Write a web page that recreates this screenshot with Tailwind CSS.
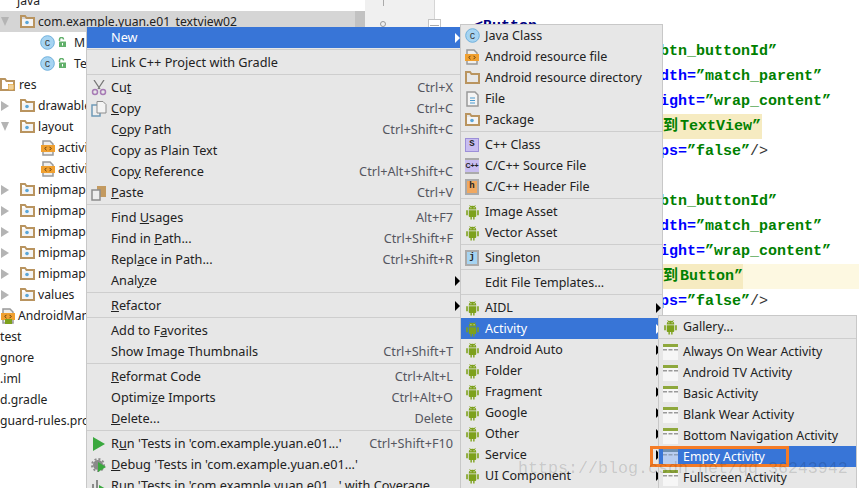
<!DOCTYPE html>
<html lang="en">
<head>
<meta charset="utf-8">
<title>New Empty Activity</title>
<script src="https://cdn.jsdelivr.net/npm/@tailwindcss/browser@4"></script>
</head>
<body class="m-0 bg-white">
<!-- shared icons -->
<svg width="0" height="0" class="absolute">
  <symbol id="android" viewBox="0 0 16 16">
    <path fill="#7da11c" d="M4 5.200a4 3.800 0 0 1 8 0zM4 6h8v6.200c0 .6-.4 1-1 1h-.8V16H8.700v-2.800H7.300V16H5.800v-2.800H5c-.6 0-1-.4-1-1zM1.300 6H3v5.500H1.300zM13 6h1.700v5.500H13z"/>
    <path stroke="#7da11c" d="M5 .8l1.200 1.800M11 .8L9.800 2.600"/>
    <path fill="#e7e7e7" d="M5.800 3h1v1h-1zM9.200 3h1v1h-1z"/>
  </symbol>
  <symbol id="folder" viewBox="0 0 15 13">
    <path fill="none" stroke="#b9945f" stroke-width="2" d="M1 12V1h4l1.500 2H14v9z"/>
    <path fill="#f4f4f4" d="M2 4h11v7H2z"/>
    <circle cx="7" cy="7.500" r="1.800" fill="#5aa6d8"/>
  </symbol>
  <symbol id="folder-plain" viewBox="0 0 15 13">
    <path fill="none" stroke="#b9945f" stroke-width="2" d="M1 12V1h4l1.500 2H14v9z"/>
  </symbol>
  <symbol id="cls" viewBox="0 0 15 15">
    <circle cx="7.500" cy="7.500" r="6.800" fill="#a6d4f2" stroke="#6fb0dc"/>
    <text x="7.500" y="10.500" text-anchor="middle" font-family="Liberation Mono, monospace" font-size="9" fill="#333">C</text>
  </symbol>
  <symbol id="res-file" viewBox="0 0 14 16">
    <path fill="#eee" stroke="#999" stroke-width="1.500" d="M2 1h7l3 3v11H2z"/>
    <path fill="#f0a030" d="M0 5h14v7H0z"/>
    <path fill="none" stroke="#5b3a10" d="M5.500 6.800L3.800 8.500l1.700 1.700M8.500 6.800l1.700 1.700-1.700 1.700"/>
  </symbol>
  <symbol id="lock" viewBox="0 0 9 11">
    <path fill="none" stroke="#62b06b" stroke-width="1.500" d="M1.500 4V2.500a2 2 0 0 1 4 0"/>
    <path fill="#62b06b" d="M1 4.500h7V10H1z"/>
    <path fill="#fff" d="M4 6h1v2.500H4z"/>
  </symbol>
  <symbol id="activity" viewBox="0 0 15 16">
    <path fill="#f6f6f6" d="M0 0h15v16H0z"/>
    <path fill="#8ea83c" d="M0 0h15v3H0z"/>
    <path fill="#999" d="M0 5h4v1.500H0zM5.500 5h4v1.500h-4zM11 5h4v1.500h-4z"/>
  </symbol>
</svg>

<div class="relative w-[859px] h-[488px] overflow-hidden font-['Noto_Sans',sans-serif] text-[12.7px] text-[#222]">
  <div class="flex h-full">
    <!-- project tree -->
    <div class="w-[365px] shrink-0 -mt-[10px] text-[12.2px] leading-[21px] whitespace-nowrap">
      <div class="flex items-center h-[21px] pl-[17px]"><span>java</span></div>
      <div class="flex items-center h-[21px] bg-[linear-gradient(to_right,#d5d5d5_355px,#c2c2c2_355px)]">
        <span class="ml-[1px] mr-[11px] w-0 h-0 border-x-[4px] border-x-transparent border-t-[9px] border-t-[#b4b4b4]"></span>
        <svg class="w-[15px] h-[13px] mr-[3px]"><use href="#folder"/></svg><span>com.example.yuan.e01_textview02</span>
      </div>
      <div class="flex items-center h-[21px] pl-[40px]"><svg class="w-[15px] h-[15px] mr-[3px]"><use href="#cls"/></svg><svg class="w-[9px] h-[11px] mr-[7px]"><use href="#lock"/></svg><span>M</span></div>
      <div class="flex items-center h-[21px] pl-[40px]"><svg class="w-[15px] h-[15px] mr-[3px]"><use href="#cls"/></svg><svg class="w-[9px] h-[11px] mr-[7px]"><use href="#lock"/></svg><span>Te</span></div>
      <div class="flex items-center h-[21px]"><svg class="w-[15px] h-[13px] mr-[4px]" viewBox="0 0 15 13"><use href="#folder-plain"/><path fill="#e0a030" d="M8 6h6v6H8z"/><path stroke="#fff" stroke-width=".6" d="M8 8h6M8 10h6M10 6v6M12 6v6"/></svg><span>res</span></div>
      <div class="flex items-center h-[21px]"><span class="ml-[1px] mr-[11px] w-0 h-0 border-y-[5px] border-y-transparent border-l-[8px] border-l-[#b4b4b4]"></span><svg class="w-[15px] h-[13px] mr-[3px]"><use href="#folder"/></svg><span>drawable</span></div>
      <div class="flex items-center h-[21px]"><span class="ml-[1px] mr-[11px] w-0 h-0 border-x-[4px] border-x-transparent border-t-[9px] border-t-[#b4b4b4]"></span><svg class="w-[15px] h-[13px] mr-[3px]"><use href="#folder"/></svg><span>layout</span></div>
      <div class="flex items-center h-[21px] pl-[41px]"><svg class="w-[14px] h-[16px] mr-[3px]"><use href="#res-file"/></svg><span>activity</span></div>
      <div class="flex items-center h-[21px] pl-[41px]"><svg class="w-[14px] h-[16px] mr-[3px]"><use href="#res-file"/></svg><span>activity</span></div>
      <div class="flex items-center h-[21px]"><span class="ml-[1px] mr-[11px] w-0 h-0 border-y-[5px] border-y-transparent border-l-[8px] border-l-[#b4b4b4]"></span><svg class="w-[15px] h-[13px] mr-[3px]"><use href="#folder"/></svg><span>mipmap</span></div>
      <div class="flex items-center h-[21px]"><span class="ml-[1px] mr-[11px] w-0 h-0 border-y-[5px] border-y-transparent border-l-[8px] border-l-[#b4b4b4]"></span><svg class="w-[15px] h-[13px] mr-[3px]"><use href="#folder"/></svg><span>mipmap</span></div>
      <div class="flex items-center h-[21px]"><span class="ml-[1px] mr-[11px] w-0 h-0 border-y-[5px] border-y-transparent border-l-[8px] border-l-[#b4b4b4]"></span><svg class="w-[15px] h-[13px] mr-[3px]"><use href="#folder"/></svg><span>mipmap</span></div>
      <div class="flex items-center h-[21px]"><span class="ml-[1px] mr-[11px] w-0 h-0 border-y-[5px] border-y-transparent border-l-[8px] border-l-[#b4b4b4]"></span><svg class="w-[15px] h-[13px] mr-[3px]"><use href="#folder"/></svg><span>mipmap</span></div>
      <div class="flex items-center h-[21px]"><span class="ml-[1px] mr-[11px] w-0 h-0 border-y-[5px] border-y-transparent border-l-[8px] border-l-[#b4b4b4]"></span><svg class="w-[15px] h-[13px] mr-[3px]"><use href="#folder"/></svg><span>mipmap</span></div>
      <div class="flex items-center h-[21px]"><span class="ml-[1px] mr-[11px] w-0 h-0 border-y-[5px] border-y-transparent border-l-[8px] border-l-[#b4b4b4]"></span><svg class="w-[15px] h-[13px] mr-[3px]"><use href="#folder"/></svg><span>values</span></div>
      <div class="flex items-center h-[21px] pl-[1px]"><svg class="w-[14px] h-[16px] mr-[3px]" viewBox="0 0 14 16"><use href="#res-file"/><path fill="#7da11c" d="M4 11h7v5H4z"/></svg><span>AndroidManifest.xml</span></div>
      <div class="h-[21px]">test</div>
      <div class="h-[21px]">gnore</div>
      <div class="h-[21px]">.iml</div>
      <div class="h-[21px]">d.gradle</div>
      <div class="h-[21px]">guard-rules.pro</div>
      <div class="h-[21px]"></div>
      <div class="h-[21px]"></div>
      <div class="h-[21px]"></div>
      <div class="h-[21px] mt-[-1px]">ore</div>
    </div>
    <!-- gutter -->
    <div class="relative w-[70px] shrink-0 bg-[#f0f0f0] border-r border-[#d5d5d5]">
      <div class="absolute left-[18px] top-0 w-[1px] h-[6px] bg-[#aaa]"></div>
      <div class="absolute left-[15px] top-[21px] w-[6px] h-[6px] rounded-full border border-[#999]"></div>
      <div class="absolute left-[63px] top-[19px] flex items-center justify-center w-[13px] h-[12px] bg-white border border-[#c4c4c4]"><div class="w-[9px] h-[1px] bg-[#aaa]"></div></div>
    </div>
    <!-- editor -->
    <div class="flex-1 min-w-0 pt-[14px] font-['Liberation_Mono','Noto_Sans_CJK_SC',monospace] text-[15px] font-bold leading-[25px] whitespace-nowrap">
      <div class="h-[25px] pl-[39px] text-[#000080]">&lt;Button</div>
      <div class="h-[25px] pl-[72px] text-[#0000ff]">android:id=<span class="text-[#008000]">”@+id/btn_buttonId”</span></div>
      <div class="h-[25px] pl-[72px] text-[#0000ff]">android:layout_width=<span class="text-[#008000]">”match_parent”</span></div>
      <div class="h-[25px] pl-[72px] text-[#0000ff]">android:layout_height=<span class="text-[#008000]">”wrap_content”</span></div>
      <div class="h-[25px] pl-[72px] text-[#0000ff]">android:text=<span class="inline-block h-[25px] bg-[#f6ebc1] pr-[1px] text-[#008000]">”跳转到<span class="ml-[2px]">TextView”</span></span></div>
      <div class="h-[25px] pl-[72px] text-[#0000ff]">android:textAllCaps=<span class="text-[#008000]">”false”</span><span class="font-normal text-[#333]">/&gt;</span></div>
      <div class="h-[25px] pl-[39px] text-[#000080]">&lt;Button</div>
      <div class="h-[25px] pl-[72px] text-[#0000ff]">android:id=<span class="text-[#008000]">”@+id/btn_buttonId”</span></div>
      <div class="h-[25px] pl-[72px] text-[#0000ff]">android:layout_width=<span class="text-[#008000]">”match_parent”</span></div>
      <div class="h-[25px] pl-[72px] text-[#0000ff]">android:layout_height=<span class="text-[#008000]">”wrap_content”</span></div>
      <div class="h-[25px] pl-[72px] bg-[#fdf8e1] text-[#0000ff]">android:text=<span class="inline-block h-[25px] bg-[#f6ebc1] text-[#008000]">”跳转到<span class="ml-[2px]">Button”</span></span></div>
      <div class="h-[25px] pl-[72px] text-[#0000ff]">android:textAllCaps=<span class="text-[#008000]">”false”</span><span class="font-normal text-[#333]">/&gt;</span></div>
    </div>
  </div>

  <!-- context menu -->
  <div class="absolute left-[86px] top-[27px] w-[375px] bg-[#e7e7e7] border-l border-[#c8c8c8] leading-[21px]">
    <div class="flex items-center h-[21px] pl-[24px] pr-[1px] bg-[#3875d7] text-white"><span>New</span><span class="ml-auto w-0 h-0 border-y-[5px] border-y-transparent border-l-[5px] border-l-white"></span></div>
    <div class="h-[4px] pt-[1px]"><div class="h-[1px] bg-[#cecece]"></div></div>
    <div class="flex h-[21px] pl-[24px]"><span>Link C++ Project with Gradle</span></div>
    <div class="h-[4px] pt-[1px]"><div class="h-[1px] bg-[#cecece]"></div></div>
    <div class="flex items-center h-[21px] pl-[4px] pr-[8px]"><svg class="w-[16px] h-[16px] mr-[4px]" viewBox="0 0 16 16"><path fill="none" stroke="#777" stroke-width="1.300" d="M3 0l6 9M13 0L7 9"/><circle cx="4" cy="12" r="2.500" fill="none" stroke="#a77bb5" stroke-width="1.500"/><circle cx="12" cy="12" r="2.500" fill="none" stroke="#a77bb5" stroke-width="1.500"/></svg><span>Cu<u>t</u></span><span class="ml-auto text-[#55565f]">Ctrl+X</span></div>
    <div class="flex items-center h-[21px] pl-[4px] pr-[8px]"><svg class="w-[16px] h-[16px] mr-[4px]" viewBox="0 0 16 16"><path fill="#eee" stroke="#6f9ab8" stroke-width="1.500" d="M1 4h8v11H1z"/><path fill="#f4f4f4" stroke="#8d8d8d" d="M6 .5h6l3 3V12H6z"/></svg><span><u>C</u>opy</span><span class="ml-auto text-[#55565f]">Ctrl+C</span></div>
    <div class="flex h-[21px] pl-[24px] pr-[8px]"><span>C<u>o</u>py Path</span><span class="ml-auto text-[#55565f]">Ctrl+Shift+C</span></div>
    <div class="flex h-[21px] pl-[24px] pr-[8px]"><span>Copy as Plain Text</span></div>
    <div class="flex h-[21px] pl-[24px] pr-[8px]"><span>Cop<u>y</u> Reference</span><span class="ml-auto text-[#55565f]">Ctrl+Alt+Shift+C</span></div>
    <div class="flex items-center h-[21px] pl-[4px] pr-[8px]"><svg class="w-[16px] h-[16px] mr-[4px]" viewBox="0 0 16 16"><path fill="#c39a60" d="M6 1h9v11H6z"/><path fill="#eee" stroke="#8d8d8d" stroke-width="1.500" d="M1 5h8v10H1z"/></svg><span><u>P</u>aste</span><span class="ml-auto text-[#55565f]">Ctrl+V</span></div>
    <div class="h-[4px] pt-[1px]"><div class="h-[1px] bg-[#cecece]"></div></div>
    <div class="flex h-[21px] pl-[24px] pr-[8px]"><span>Find <u>U</u>sages</span><span class="ml-auto text-[#55565f]">Alt+F7</span></div>
    <div class="flex h-[21px] pl-[24px] pr-[8px]"><span>Find in <u>P</u>ath...</span><span class="ml-auto text-[#55565f]">Ctrl+Shift+F</span></div>
    <div class="flex h-[21px] pl-[24px] pr-[8px]"><span>Repl<u>a</u>ce in Path...</span><span class="ml-auto text-[#55565f]">Ctrl+Shift+R</span></div>
    <div class="flex items-center h-[21px] pl-[24px] pr-[1px]"><span>Anal<u>y</u>ze</span><span class="ml-auto w-0 h-0 border-y-[5px] border-y-transparent border-l-[5px] border-l-black"></span></div>
    <div class="h-[4px] pt-[1px]"><div class="h-[1px] bg-[#cecece]"></div></div>
    <div class="flex items-center h-[21px] pl-[24px] pr-[1px]"><span><u>R</u>efactor</span><span class="ml-auto w-0 h-0 border-y-[5px] border-y-transparent border-l-[5px] border-l-black"></span></div>
    <div class="h-[4px] pt-[1px]"><div class="h-[1px] bg-[#cecece]"></div></div>
    <div class="flex h-[21px] pl-[24px] pr-[8px]"><span>Add to F<u>a</u>vorites</span></div>
    <div class="flex h-[21px] pl-[24px] pr-[8px]"><span>Show Image Thumbnails</span><span class="ml-auto text-[#55565f]">Ctrl+Shift+T</span></div>
    <div class="h-[4px] pt-[1px]"><div class="h-[1px] bg-[#cecece]"></div></div>
    <div class="flex h-[21px] pl-[24px] pr-[8px]"><span><u>R</u>eformat Code</span><span class="ml-auto text-[#55565f]">Ctrl+Alt+L</span></div>
    <div class="flex h-[21px] pl-[24px] pr-[8px]"><span>Optimi<u>z</u>e Imports</span><span class="ml-auto text-[#55565f]">Ctrl+Alt+O</span></div>
    <div class="flex h-[21px] pl-[24px] pr-[8px]"><span><u>D</u>elete...</span><span class="ml-auto text-[#55565f]">Delete</span></div>
    <div class="h-[4px] pt-[1px]"><div class="h-[1px] bg-[#cecece]"></div></div>
    <div class="flex items-center h-[21px] pl-[4px] pr-[8px]"><svg class="w-[16px] h-[16px] mr-[4px]" viewBox="0 0 16 16"><path fill="#3aa83e" d="M2 1l12 7-12 7z"/></svg><span>R<u>u</u>n 'Tests in 'com.example.yuan.e01...'</span><span class="ml-auto text-[#55565f]">Ctrl+Shift+F10</span></div>
    <div class="flex items-center h-[21px] pl-[4px] pr-[8px]"><svg class="w-[16px] h-[16px] mr-[4px]" viewBox="0 0 16 16"><circle cx="7" cy="8" r="5" fill="#8a8a8a"/><circle cx="7" cy="8" r="6" fill="none" stroke="#8a8a8a" stroke-width="2" stroke-dasharray="2 2"/><path fill="#3aa83e" d="M7 5l8 5-8 5z"/></svg><span><u>D</u>ebug 'Tests in 'com.example.yuan.e01...'</span></div>
    <div class="flex items-center h-[21px] pl-[4px] pr-[8px]"><svg class="w-[16px] h-[16px] mr-[4px]" viewBox="0 0 16 16"><path fill="#8a8a8a" d="M1 6h2v9H1zM5 2h2v13H5z"/><path fill="#3aa83e" d="M8 7l7 4-7 4z"/></svg><span>Run 'Tests in 'com.example.yuan.e01...' with Coverage</span></div>
  </div>

  <!-- New submenu -->
  <div class="absolute left-[460px] top-[24px] w-[203px] h-[470px] bg-[#e7e7e7] border border-[#c8c8c8] text-[12.5px] leading-[21px]">
    <div class="flex items-center h-[21px] pl-[4px]"><svg class="w-[15px] h-[15px] mr-[5px]"><use href="#cls"/></svg><span>Java Class</span></div>
    <div class="flex items-center h-[21px] pl-[4px]"><svg class="w-[14px] h-[16px] mr-[6px]"><use href="#res-file"/></svg><span>Android resource file</span></div>
    <div class="flex items-center h-[21px] pl-[4px]"><svg class="w-[15px] h-[13px] mr-[5px]"><use href="#folder-plain"/></svg><span>Android resource directory</span></div>
    <div class="flex items-center h-[21px] pl-[4px]"><svg class="w-[15px] h-[16px] mr-[5px]" viewBox="0 0 15 16"><path fill="#f4f4f4" stroke="#999" stroke-width="1.500" d="M2 1h8l3 3v11H2z"/><path stroke="#4a9bd0" d="M5 7h5M5 9.500h5M5 12h5"/></svg><span>File</span></div>
    <div class="flex items-center h-[21px] pl-[4px]"><svg class="w-[15px] h-[13px] mr-[5px]"><use href="#folder"/></svg><span>Package</span></div>
    <div class="h-[4px] pt-[1px]"><div class="h-[1px] bg-[#cecece]"></div></div>
    <div class="flex items-center h-[21px] pl-[4px]"><span class="flex items-center justify-center w-[14px] h-[14px] mr-[6px] bg-[#c8bdf0] border border-[#9c8fd8] font-['Liberation_Mono',monospace] text-[9px] font-bold">S</span><span>C++ Class</span></div>
    <div class="flex items-center h-[21px] pl-[4px]"><span class="flex items-center justify-center w-[14px] h-[16px] mr-[6px] bg-[#c8bdf0] border-y-2 border-[#aaa] font-['Liberation_Sans',sans-serif] text-[7px] leading-none font-bold">C++</span><span>C/C++ Source File</span></div>
    <div class="flex items-center h-[21px] pl-[4px]"><span class="flex items-center justify-center w-[14px] h-[16px] mr-[6px] bg-[#f0a860] border-2 border-[#aaa] font-['Liberation_Mono',monospace] text-[9px] font-bold">h</span><span>C/C++ Header File</span></div>
    <div class="h-[4px] pt-[1px]"><div class="h-[1px] bg-[#cecece]"></div></div>
    <div class="flex items-center h-[21px] pl-[4px]"><svg class="w-[15px] h-[16px] mr-[5px]"><use href="#android"/></svg><span>Image Asset</span></div>
    <div class="flex items-center h-[21px] pl-[4px]"><svg class="w-[15px] h-[16px] mr-[5px]"><use href="#android"/></svg><span>Vector Asset</span></div>
    <div class="h-[4px] pt-[1px]"><div class="h-[1px] bg-[#cecece]"></div></div>
    <div class="flex items-center h-[21px] pl-[4px]"><span class="flex items-center justify-center w-[14px] h-[16px] mr-[6px] bg-[#a6d4f2] border-2 border-[#aaa] font-['Liberation_Mono',monospace] text-[9px] font-bold">j</span><span>Singleton</span></div>
    <div class="h-[4px] pt-[1px]"><div class="h-[1px] bg-[#cecece]"></div></div>
    <div class="flex h-[21px] pl-[24px]"><span>Edit File Templates...</span></div>
    <div class="h-[4px] pt-[1px]"><div class="h-[1px] bg-[#cecece]"></div></div>
    <div class="flex items-center h-[21px] pl-[4px] pr-[1px]"><svg class="w-[15px] h-[16px] mr-[5px]"><use href="#android"/></svg><span>AIDL</span><span class="ml-auto w-0 h-0 border-y-[5px] border-y-transparent border-l-[5px] border-l-black"></span></div>
    <div class="flex items-center h-[21px] pl-[4px] pr-[1px] bg-[#3875d7] text-white"><svg class="w-[15px] h-[16px] mr-[5px]"><use href="#android"/></svg><span>Activity</span><span class="ml-auto w-0 h-0 border-y-[5px] border-y-transparent border-l-[5px] border-l-white"></span></div>
    <div class="flex items-center h-[21px] pl-[4px] pr-[1px]"><svg class="w-[15px] h-[16px] mr-[5px]"><use href="#android"/></svg><span>Android Auto</span><span class="ml-auto w-0 h-0 border-y-[5px] border-y-transparent border-l-[5px] border-l-black"></span></div>
    <div class="flex items-center h-[21px] pl-[4px] pr-[1px]"><svg class="w-[15px] h-[16px] mr-[5px]"><use href="#android"/></svg><span>Folder</span><span class="ml-auto w-0 h-0 border-y-[5px] border-y-transparent border-l-[5px] border-l-black"></span></div>
    <div class="flex items-center h-[21px] pl-[4px] pr-[1px]"><svg class="w-[15px] h-[16px] mr-[5px]"><use href="#android"/></svg><span>Fragment</span><span class="ml-auto w-0 h-0 border-y-[5px] border-y-transparent border-l-[5px] border-l-black"></span></div>
    <div class="flex items-center h-[21px] pl-[4px] pr-[1px]"><svg class="w-[15px] h-[16px] mr-[5px]"><use href="#android"/></svg><span>Google</span><span class="ml-auto w-0 h-0 border-y-[5px] border-y-transparent border-l-[5px] border-l-black"></span></div>
    <div class="flex items-center h-[21px] pl-[4px] pr-[1px]"><svg class="w-[15px] h-[16px] mr-[5px]"><use href="#android"/></svg><span>Other</span><span class="ml-auto w-0 h-0 border-y-[5px] border-y-transparent border-l-[5px] border-l-black"></span></div>
    <div class="flex items-center h-[21px] pl-[4px] pr-[1px]"><svg class="w-[15px] h-[16px] mr-[5px]"><use href="#android"/></svg><span>Service</span><span class="ml-auto w-0 h-0 border-y-[5px] border-y-transparent border-l-[5px] border-l-black"></span></div>
    <div class="flex items-center h-[21px] pl-[4px] pr-[1px]"><svg class="w-[15px] h-[16px] mr-[5px]"><use href="#android"/></svg><span>UI Component</span><span class="ml-auto w-0 h-0 border-y-[5px] border-y-transparent border-l-[5px] border-l-black"></span></div>
  </div>

  <!-- Activity submenu -->
  <div class="absolute left-[658px] top-[315px] w-[199px] h-[180px] bg-[#e7e7e7] border border-[#c8c8c8] text-[12.4px] leading-[21px]">
    <div class="flex items-center h-[21px] pl-[4px]"><svg class="w-[15px] h-[16px] mr-[5px]"><use href="#android"/></svg><span>Gallery...</span></div>
    <div class="h-[4px] pt-[1px]"><div class="h-[1px] bg-[#cecece]"></div></div>
    <div class="flex items-center h-[21px] pl-[4px]"><svg class="w-[15px] h-[16px] mr-[5px]"><use href="#activity"/></svg><span>Always On Wear Activity</span></div>
    <div class="flex items-center h-[21px] pl-[4px]"><svg class="w-[15px] h-[16px] mr-[5px]"><use href="#activity"/></svg><span>Android TV Activity</span></div>
    <div class="flex items-center h-[21px] pl-[4px]"><svg class="w-[15px] h-[16px] mr-[5px]"><use href="#activity"/></svg><span>Basic Activity</span></div>
    <div class="flex items-center h-[21px] pl-[4px]"><svg class="w-[15px] h-[16px] mr-[5px]"><use href="#activity"/></svg><span>Blank Wear Activity</span></div>
    <div class="flex items-center h-[21px] pl-[4px]"><svg class="w-[15px] h-[16px] mr-[5px]"><use href="#activity"/></svg><span>Bottom Navigation Activity</span></div>
    <div class="flex items-center h-[21px] pl-[4px] bg-[#3875d7] text-white"><svg class="w-[15px] h-[16px] mr-[5px]" viewBox="0 0 15 16"><path fill="#b8cdf0" d="M0 0h15v16H0z"/><path fill="#6f8fb0" d="M0 0h15v3H0z"/><path fill="#8fa0b8" d="M0 5h4v1.500H0zM5.500 5h4v1.500h-4zM11 5h4v1.500h-4z"/></svg><span>Empty Activity</span></div>
    <div class="flex items-center h-[21px] pl-[4px]"><svg class="w-[15px] h-[16px] mr-[5px]"><use href="#activity"/></svg><span>Fullscreen Activity</span></div>
  </div>

  <!-- annotation and watermark over everything -->
  <div class="absolute left-[650px] top-[446px] w-[139px] h-[21px] border-[3px] border-[#f57c26]"></div>
  <div class="absolute left-[518px] top-[459px] font-['Liberation_Mono',monospace] text-[16.67px] leading-[20px] whitespace-nowrap text-black/15">https://blog.csdn.net/qq_36243942</div>
</div>
</body>
</html>
